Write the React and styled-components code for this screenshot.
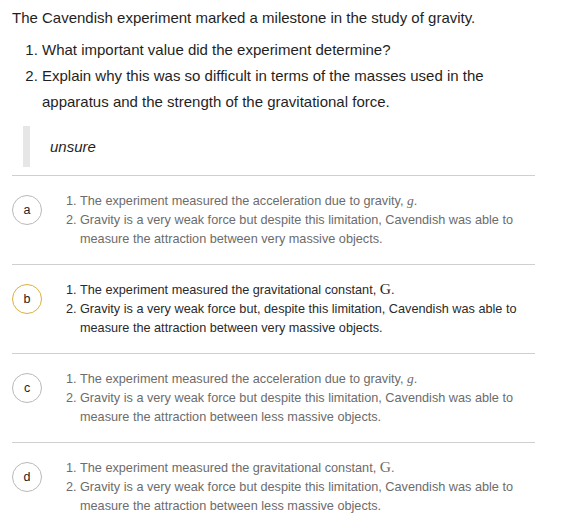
import React from 'react';
import styled, { createGlobalStyle } from 'styled-components';

const GlobalStyle = createGlobalStyle`
  body {
    margin: 0;
    background: #ffffff;
    font-family: "Liberation Sans", Arial, sans-serif;
    color: #1f1f1f;
  }
`;

const Page = styled.div`
  width: 523px;
  padding: 8px 0 0 12px;
`;

const Prompt = styled.p`
  margin: 0;
  font-size: 15px;
  line-height: 20px;
`;

const Questions = styled.ol`
  margin: 9px 0 0;
  padding-left: 30px;
  font-size: 15px;
  line-height: 26px;
`;

const Answer = styled.blockquote`
  margin: 11px 0 0 11px;
  padding: 11px 0 10px 20px;
  border-left: 7px solid #e6e6e6;
  font-size: 15px;
  font-style: italic;
  line-height: 20px;
`;

const Choices = styled.div`
  margin-top: 8px;
`;

const Choice = styled.div`
  display: flex;
  align-items: flex-start;
  gap: 20px;
  padding: 16px 0 15px;
  border-top: 1px solid #cfcfcf;
`;

const Bubble = styled.div`
  flex: none;
  width: 28px;
  height: 28px;
  margin-top: 3px;
  border-radius: 50%;
  border: 1px solid ${props => (props.$selected ? '#d8b23a' : '#b9b9b9')};
  display: flex;
  align-items: center;
  justify-content: center;
  font-size: 12.5px;
  color: #222;
`;

const Lines = styled.ol`
  margin: 0;
  padding-left: 18px;
  font-size: 12.7px;
  line-height: 19px;
  color: ${props => (props.$selected ? '#2a2a2a' : '#6c6c6c')};
`;

const Sym = styled.span`
  font-family: "Liberation Serif", "Times New Roman", serif;
  font-size: ${props => (props.$upper ? '15.5px' : '13.5px')};
  font-style: ${props => (props.$upper ? 'normal' : 'italic')};
  line-height: 1;
`;

const options = [
  { key: 'a', first: 'acceleration', masses: 'very massive', comma: false },
  { key: 'b', first: 'constant', masses: 'very massive', comma: true, selected: true },
  { key: 'c', first: 'acceleration', masses: 'less massive', comma: false },
  { key: 'd', first: 'constant', masses: 'less massive', comma: false },
];

export default function App() {
  return (
    <>
      <GlobalStyle />
      <Page>
        <Prompt>The Cavendish experiment marked a milestone in the study of gravity.</Prompt>
        <Questions>
          <li>What important value did the experiment determine?</li>
          <li>
            Explain why this was so difficult in terms of the masses used in the apparatus and the
            strength of the gravitational force.
          </li>
        </Questions>
        <Answer>unsure</Answer>
        <Choices>
          {options.map(o => (
            <Choice key={o.key}>
              <Bubble $selected={o.selected}>{o.key}</Bubble>
              <Lines $selected={o.selected}>
                <li>
                  {o.first === 'acceleration' ? (
                    <>The experiment measured the acceleration due to gravity, <Sym>g</Sym>.</>
                  ) : (
                    <>The experiment measured the gravitational constant, <Sym $upper>G</Sym>.</>
                  )}
                </li>
                <li>
                  Gravity is a very weak force but{o.comma ? ',' : ''} despite this limitation, Cavendish
                  was able to measure the attraction between {o.masses} objects.
                </li>
              </Lines>
            </Choice>
          ))}
        </Choices>
      </Page>
    </>
  );
}
